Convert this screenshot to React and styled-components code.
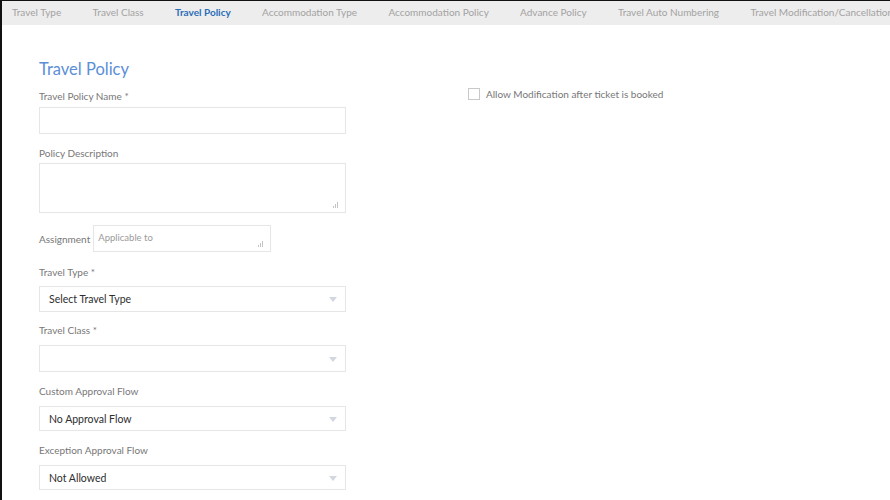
import React from "react";
import styled, { createGlobalStyle } from "styled-components";

const GlobalStyle = createGlobalStyle`
  html, body {
    margin: 0;
    padding: 0;
    background: #fff;
  }
  body {
    font-family: Lato, "Open Sans", sans-serif;
  }
`;

const tabs = [
  "Travel Type",
  "Travel Class",
  "Travel Policy",
  "Accommodation Type",
  "Accommodation Policy",
  "Advance Policy",
  "Travel Auto Numbering",
  "Travel Modification/Cancellation",
];

const Page = styled.div`
  width: 888px;
  height: 499px;
  border-left: 2px solid #111;
  border-top: 1px solid #111;
  overflow: hidden;
  background: #fff;
`;

const TabBar = styled.div`
  box-sizing: border-box;
  display: flex;
  align-items: center;
  height: 24px;
  padding: 0 0 2px 10px;
  gap: 31.3px;
  background: #eeeded;
  white-space: nowrap;
  overflow: hidden;
`;

const Tab = styled.div`
  flex-shrink: 0;
  font-size: 10px;
  color: ${(props) => (props.active ? "#2a6db8" : "#a2a2a2")};
  font-weight: ${(props) => (props.active ? 700 : 400)};
  cursor: pointer;
`;

const Content = styled.div`
  display: flex;
  padding: 34px 0 0 37px;
`;

const LeftColumn = styled.div`
  width: 307px;
  display: flex;
  flex-direction: column;
`;

const RightColumn = styled.div`
  margin-left: 122px;
  padding-top: 29px;
`;

const Heading = styled.h2`
  margin: 0;
  font-size: 16.5px;
  line-height: 20px;
  font-weight: 400;
  color: #5b8ed6;
`;

const Field = styled.div`
  display: flex;
  flex-direction: column;
  margin-top: ${(props) => props.top || 12}px;
`;

const Label = styled.label`
  font-size: 10px;
  line-height: 14px;
  color: #777;
  margin-bottom: ${(props) => props.gap || 4}px;
`;

const TextInput = styled.input`
  box-sizing: border-box;
  width: 100%;
  height: 27px;
  border: 1px solid #e6e6e6;
  outline: none;
  padding: 0 9px;
  font-family: inherit;
  font-size: 10.5px;
`;

const TextArea = styled.textarea`
  box-sizing: border-box;
  display: block;
  width: ${(props) => props.width || "100%"};
  height: ${(props) => props.height || 50}px;
  border: 1px solid #e6e6e6;
  outline: none;
  padding: 6px 4px;
  font-family: inherit;
  font-size: 9.5px;
  resize: vertical;

  &::placeholder {
    color: #9a9a9a;
  }

  &::-webkit-resizer {
    background-color: transparent;
    background-image: linear-gradient(#c4c4c4, #c4c4c4),
      linear-gradient(#c4c4c4, #c4c4c4), linear-gradient(#c4c4c4, #c4c4c4);
    background-size: 1px 2px, 1px 4px, 1px 6px;
    background-position: 3px 9px, 5px 7px, 7px 5px;
    background-repeat: no-repeat;
  }
`;

const AssignRow = styled.div`
  display: flex;
  align-items: center;
  gap: 3px;
  margin-top: 12px;
`;

const InlineLabel = styled.span`
  font-size: 10px;
  color: #777;
`;

const SelectWrap = styled.div`
  position: relative;
  width: 100%;
`;

const Select = styled.select`
  box-sizing: border-box;
  width: 100%;
  height: ${(props) => props.h || 26}px;
  border: 1px solid #e6e6e6;
  background: #fff;
  appearance: none;
  outline: none;
  padding: 0 9px;
  font-family: inherit;
  font-size: 10.5px;
  color: #2e2e2e;
`;

const Caret = styled.span`
  position: absolute;
  right: 9px;
  top: 50%;
  margin-top: -2px;
  width: 0;
  height: 0;
  border-left: 4.5px solid transparent;
  border-right: 4.5px solid transparent;
  border-top: 5px solid #d3d7df;
  pointer-events: none;
`;

const CheckRow = styled.label`
  display: flex;
  align-items: center;
  gap: 6px;
  font-size: 10px;
  color: #777;
  cursor: pointer;
`;

const CheckBox = styled.span`
  box-sizing: border-box;
  width: 12px;
  height: 12px;
  border: 1px solid #c9c9c9;
  background: #fff;
`;

const SelectField = ({ label, value, gap, h, top }) => (
  <Field top={top}>
    <Label gap={gap}>{label}</Label>
    <SelectWrap>
      <Select h={h} defaultValue={value}>
        <option value={value}>{value}</option>
      </Select>
      <Caret />
    </SelectWrap>
  </Field>
);

const App = () => {
  return (
    <>
      <GlobalStyle />
      <Page>
        <TabBar>
          {tabs.map((t) => (
            <Tab key={t} active={t === "Travel Policy"}>
              {t}
            </Tab>
          ))}
        </TabBar>
        <Content>
          <LeftColumn>
            <Heading>Travel Policy</Heading>
            <Field top={10}>
              <Label>Travel Policy Name *</Label>
              <TextInput />
            </Field>
            <Field>
              <Label gap={3}>Policy Description</Label>
              <TextArea />
            </Field>
            <AssignRow>
              <InlineLabel>Assignment</InlineLabel>
              <TextArea width="178px" height={27} placeholder="Applicable to" />
            </AssignRow>
            <SelectField label="Travel Type *" value="Select Travel Type" gap={7} top={13} />
            <SelectField label="Travel Class *" value="" gap={8} h={27} top={11} />
            <SelectField label="Custom Approval Flow" value="No Approval Flow" gap={8} h={25} />
            <SelectField label="Exception Approval Flow" value="Not Allowed" gap={8} h={25} top={12} />
          </LeftColumn>
          <RightColumn>
            <CheckRow>
              <CheckBox />
              Allow Modification after ticket is booked
            </CheckRow>
          </RightColumn>
        </Content>
      </Page>
    </>
  );
};

export default App;
